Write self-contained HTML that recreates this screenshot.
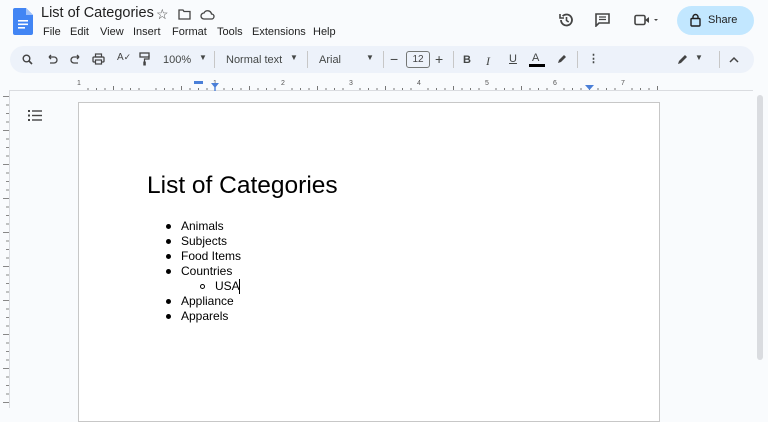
<!DOCTYPE html>
<html><head><meta charset="utf-8"><style>
*{margin:0;padding:0;box-sizing:border-box}
body{width:768px;height:408px;overflow:hidden;background:#f9fbfd;font-family:"Liberation Sans",Arial,sans-serif;color:#1f1f1f;position:relative}
.a{position:absolute}
.menu span{position:absolute;white-space:nowrap}
.tb{left:10px;top:46px;width:744px;height:27px;background:#edf2fa;border-radius:14px}
.t{font-size:11px;color:#444746;white-space:nowrap}
.sep{width:1px;height:17px;background:#c7c7c7;top:51px}
svg{position:absolute}
.li{font-size:12px;color:#000}
.dot{width:5px;height:5px;border-radius:50%;background:#000}
</style></head><body>
<svg style="left:13px;top:8px" width="20" height="27" viewBox="0 0 20 27"><path d="M2 0h11l7 7v18a2 2 0 0 1-2 2H2a2 2 0 0 1-2-2V2a2 2 0 0 1 2-2z" fill="#4285f4"/><path d="M13 0v7h7z" fill="#a1c2fa"/><rect x="5" y="12" width="10" height="1.6" fill="#fff"/><rect x="5" y="15.5" width="10" height="1.6" fill="#fff"/><rect x="5" y="19" width="7" height="1.6" fill="#fff"/></svg>
<div class="a" style="left:41px;top:5px;font-size:14.5px;color:#1f1f1f;white-space:nowrap">List of Categories</div>
<div class="a" style="left:156px;top:6px;font-size:14px;color:#444">☆</div>
<svg style="left:178px;top:9px" width="13" height="11" viewBox="0 0 13 11"><path d="M1 1h4l1 1.5h6v7.5H1z" fill="none" stroke="#444" stroke-width="1.3"/></svg>
<svg style="left:200px;top:9px" width="15" height="11" viewBox="0 0 15 11"><path d="M4 10a3 3 0 0 1 0-6 4 4 0 0 1 7.5 1 2.5 2.5 0 0 1 0 5z" fill="none" stroke="#444" stroke-width="1.3"/></svg>
<div class="a menu" style="left:0;top:26px;font-size:11px;color:#1f1f1f"><span style="left:43px">File</span><span style="left:70px">Edit</span><span style="left:100px">View</span><span style="left:133px">Insert</span><span style="left:172px">Format</span><span style="left:217px">Tools</span><span style="left:252px">Extensions</span><span style="left:313px">Help</span></div>
<svg style="left:558px;top:12px" width="16" height="16" viewBox="0 0 16 16"><path d="M3 8a5.5 5.5 0 1 0 1.6-3.9" fill="none" stroke="#444" stroke-width="1.8"/><path d="M2 2v4h4" fill="none" stroke="#444" stroke-width="1.6"/><path d="M8.5 5v3.5l2.2 1.5" fill="none" stroke="#444" stroke-width="1.6"/></svg>
<svg style="left:595px;top:13px" width="15" height="14" viewBox="0 0 15 14"><path d="M1 1h13v9H4l-3 3z" fill="none" stroke="#444" stroke-width="1.6"/><path d="M4 4h7M4 6.5h7" stroke="#444" stroke-width="1.2"/></svg>
<svg style="left:634px;top:14px" width="26" height="12" viewBox="0 0 26 12"><rect x="1" y="1.5" width="10" height="9" rx="1.5" fill="none" stroke="#444" stroke-width="1.6"/><path d="M11 6l4-3v6z" fill="#444"/><path d="M20 5h4l-2 2z" fill="#444"/></svg>
<div class="a" style="left:677px;top:6px;width:77px;height:29px;background:#c2e7ff;border-radius:15px"></div>
<svg style="left:690px;top:13px" width="11" height="14" viewBox="0 0 11 14"><rect x="1" y="5.5" width="9" height="7.5" rx="1" fill="none" stroke="#1f1f1f" stroke-width="1.4"/><path d="M3 5.5V4a2.5 2.5 0 0 1 5 0v1.5" fill="none" stroke="#1f1f1f" stroke-width="1.4"/></svg>
<div class="a" style="left:708px;top:14px;font-size:11px;color:#1f1f1f">Share</div>
<div class="a tb"></div>
<svg style="left:22px;top:54px" width="11" height="11" viewBox="0 0 11 11"><circle cx="4.5" cy="4.5" r="3.3" fill="none" stroke="#444" stroke-width="1.4"/><path d="M7 7l3 3" stroke="#444" stroke-width="1.6"/></svg>
<svg style="left:47px;top:54px" width="11" height="11" viewBox="0 0 11 11"><path d="M2 3h5a3 3 0 0 1 0 6H3M2 3l2-2M2 3l2 2" fill="none" stroke="#444" stroke-width="1.3"/></svg>
<svg style="left:70px;top:54px" width="11" height="11" viewBox="0 0 11 11"><path d="M9 3H4a3 3 0 0 0 0 6h4M9 3L7 1M9 3L7 5" fill="none" stroke="#444" stroke-width="1.3"/></svg>
<svg style="left:92px;top:53px" width="13" height="12" viewBox="0 0 13 12"><rect x="1" y="4" width="11" height="5" rx="1" fill="none" stroke="#444" stroke-width="1.3"/><rect x="3.5" y="1" width="6" height="3" fill="none" stroke="#444" stroke-width="1.2"/><rect x="3.5" y="7" width="6" height="4" fill="#edf2fa" stroke="#444" stroke-width="1.2"/></svg>
<div class="a" style="left:117px;top:52px;font-size:10px;color:#444">A<span style="font-size:9px">✓</span></div>
<svg style="left:139px;top:52px" width="11" height="14" viewBox="0 0 11 14"><rect x="1" y="1" width="9" height="4" fill="none" stroke="#444" stroke-width="1.3"/><path d="M10 3h0v4H5.5v2.5" fill="none" stroke="#444" stroke-width="1.2"/><rect x="4.3" y="9.5" width="2.5" height="4" fill="#444"/></svg>
<div class="a t" style="left:163px;top:54px">100%</div>
<div class="a t" style="left:199px;top:53px;font-size:8px">▼</div>
<div class="a sep" style="left:214px"></div>
<div class="a t" style="left:226px;top:54px">Normal text</div>
<div class="a t" style="left:290px;top:53px;font-size:8px">▼</div>
<div class="a sep" style="left:307px"></div>
<div class="a t" style="left:319px;top:54px">Arial</div>
<div class="a t" style="left:366px;top:53px;font-size:8px">▼</div>
<div class="a sep" style="left:383px"></div>
<div class="a t" style="left:390px;top:51px;font-size:14px">−</div>
<div class="a" style="left:406px;top:51px;width:24px;height:17px;border:1px solid #747775;border-radius:3px;font-size:10px;color:#444;text-align:center;line-height:15px">12</div>
<div class="a t" style="left:435px;top:51px;font-size:14px">+</div>
<div class="a sep" style="left:453px"></div>
<div class="a t" style="left:463px;top:54px;font-weight:bold">B</div>
<div class="a t" style="left:486px;top:54px;font-style:italic;font-family:'Liberation Serif',serif;font-size:12px">I</div>
<div class="a t" style="left:509px;top:53px;text-decoration:underline">U</div>
<div class="a t" style="left:532px;top:52px">A</div>
<div class="a" style="left:529px;top:64px;width:16px;height:3px;background:#000"></div>
<svg style="left:556px;top:53px" width="12" height="12" viewBox="0 0 12 12"><path d="M2 10l1-3 5-5 2 2-5 5z" fill="#444"/></svg>
<div class="a sep" style="left:577px"></div>
<div class="a t" style="left:588px;top:52px;font-weight:bold">⋮</div>
<svg style="left:677px;top:53px" width="12" height="12" viewBox="0 0 12 12"><path d="M1 11l1-3 6-6 2 2-6 6z" fill="#444"/></svg>
<div class="a t" style="left:695px;top:53px;font-size:8px">▼</div>
<div class="a sep" style="left:719px"></div>
<svg style="left:729px;top:56px" width="10" height="7" viewBox="0 0 10 7"><path d="M1 6l4-4 4 4" fill="none" stroke="#444" stroke-width="1.5"/></svg>
<div class="a" style="left:9px;top:90px;width:744px;height:1px;background:#dadce0"></div>
<svg style="left:0;top:78px" width="768" height="14" id="hr"></svg>
<div class="a" style="left:194px;top:81px;width:9px;height:3px;background:#4a7fd8"></div>
<svg style="left:211px;top:83px" width="8" height="8"><path d="M0 0h8L4 5z" fill="#4a7fd8"/><rect x="3.3" y="4" width="1.4" height="4" fill="#4a7fd8"/></svg>
<svg style="left:585px;top:85px" width="9" height="6"><path d="M0 0h9L4.5 5z" fill="#4a7fd8"/></svg>
<div class="a" style="left:9px;top:91px;width:1px;height:317px;background:#dadce0"></div>
<svg style="left:0;top:91px" width="10" height="317" id="vr"></svg>
<svg style="left:28px;top:110px" width="14" height="11" viewBox="0 0 14 11"><g fill="#444"><rect x="0" y="0" width="2" height="2"/><rect x="0" y="4.5" width="2" height="2"/><rect x="0" y="9" width="2" height="2"/><rect x="4" y="0.3" width="10" height="1.4"/><rect x="4" y="4.8" width="10" height="1.4"/><rect x="4" y="9.3" width="10" height="1.4"/></g></svg>
<div class="a" style="left:78px;top:102px;width:582px;height:320px;background:#fff;border:1px solid #c7c7c7"></div>
<div class="a" style="left:757px;top:95px;width:6px;height:265px;background:#dadce0;border-radius:3px"></div>
<div class="a" style="left:147px;top:172px;font-size:24.5px;color:#000;white-space:nowrap">List of Categories</div>
<div class="a dot" style="left:166px;top:224px"></div><div class="a li" style="left:181px;top:219px">Animals</div>
<div class="a dot" style="left:166px;top:239px"></div><div class="a li" style="left:181px;top:234px">Subjects</div>
<div class="a dot" style="left:166px;top:254px"></div><div class="a li" style="left:181px;top:249px">Food Items</div>
<div class="a dot" style="left:166px;top:269px"></div><div class="a li" style="left:181px;top:264px">Countries</div>
<div class="a" style="left:200px;top:284px;width:5px;height:5px;border-radius:50%;border:1px solid #000"></div><div class="a li" style="left:215px;top:279px">USA</div>
<div class="a" style="left:239px;top:279px;width:1px;height:15px;background:#000"></div>
<div class="a dot" style="left:166px;top:299px"></div><div class="a li" style="left:181px;top:294px">Appliance</div>
<div class="a dot" style="left:166px;top:314px"></div><div class="a li" style="left:181px;top:309px">Apparels</div>
<script>
var h=document.getElementById('hr'),s='';
var inch=68,zero=147;
for(var i=-8;i<=60;i++){var x=zero+i*inch/8;if(x<76||x>660)continue;
 if(i%8==0){var n=Math.abs(i/8);if(n>0)s+='<text x="'+x+'" y="7" font-size="7" fill="#555" text-anchor="middle" font-family="Liberation Sans">'+n+'</text>';}
 else{var hh=i%4==0?4:2;s+='<rect x="'+x+'" y="'+(12-hh)+'" width="1" height="'+hh+'" fill="#777"/>';}}
h.innerHTML=s;
var v=document.getElementById('vr');s='';
for(var y=5,i=0;y<317;y+=8.5,i++){s+='<rect x="'+(i%4==0?3:6)+'" y="'+y+'" width="'+(i%4==0?6:3)+'" height="1" fill="#888"/>';}
v.innerHTML=s;
</script>
</body></html>
